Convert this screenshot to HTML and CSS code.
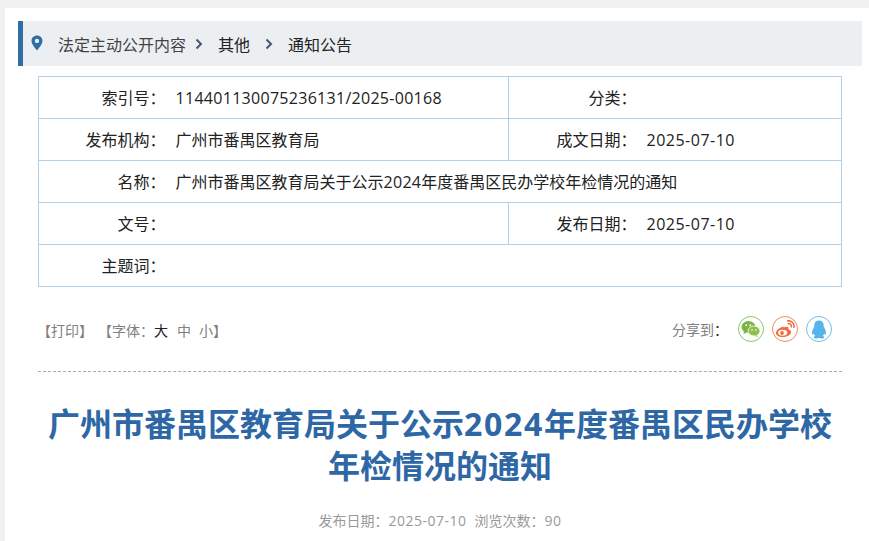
FILE: index.html
```html
<!DOCTYPE html>
<html lang="zh-CN">
<head>
<meta charset="utf-8">
<title>通知公告</title>
<link rel="stylesheet" href="styles.css">
</head>
<body>
<div class="page">
  <nav class="crumb">
    <svg class="pin" width="12" height="16" viewBox="0 0 12 16"><path fill="#2f6da3" fill-rule="evenodd" d="M6 .5C2.800.5.500 2.900.500 5.800.500 9.300 4.200 13.300 6 15.500 7.800 13.300 11.500 9.300 11.500 5.800 11.500 2.900 9.200.500 6 .500ZM6 3.700a2.200 2.200 0 1 1 0 4.400 2.200 2.200 0 0 1 0-4.400Z"/></svg>
    <a class="c1">法定主动公开内容</a>
    <svg class="chev chev1" width="8" height="12" viewBox="0 0 8 12"><path d="M1.500 1.500 6 6l-4.500 4.500" fill="none" stroke="#44586c" stroke-width="2"/></svg>
    <a class="c2">其他</a>
    <svg class="chev chev2" width="8" height="12" viewBox="0 0 8 12"><path d="M1.500 1.500 6 6l-4.500 4.500" fill="none" stroke="#44586c" stroke-width="2"/></svg>
    <a class="c2">通知公告</a>
  </nav>
  <div class="body">
    <table class="meta">
      <colgroup><col class="w1"><col class="w2"><col class="w3"><col class="w4"></colgroup>
      <tr><th>索引号：</th><td><span class="num">114401130075236131/2025-00168</span></td><th class="split">分类：</th><td></td></tr>
      <tr><th>发布机构：</th><td>广州市番禺区教育局</td><th class="split">成文日期：</th><td><span class="date">2025-07-10</span></td></tr>
      <tr><th>名称：</th><td colspan="3">广州市番禺区教育局关于公示<span class="num">2024</span>年度番禺区民办学校年检情况的通知</td></tr>
      <tr><th>文号：</th><td></td><th class="split">发布日期：</th><td><span class="date">2025-07-10</span></td></tr>
      <tr><th>主题词：</th><td colspan="3"></td></tr>
    </table>
    <div class="tools">
      <div class="left">
        <span>【打印】</span>
        <span class="font">【字体：<b>大</b><i>中</i><i>小</i>】</span>
      </div>
      <div class="share">
        <span class="lbl">分享到<em>：</em></span>
        <span class="ic wx"><svg width="20" height="18" viewBox="0 0 20 18"><ellipse cx="7.500" cy="7" rx="7" ry="6" fill="#7cb342"/><path d="M3 11l-.5 3 3-1.500z" fill="#7cb342"/><ellipse cx="13" cy="11" rx="6" ry="5" fill="#8bc34a" stroke="#fff" stroke-width=".8"/><path d="M16 15l1 2-3-1z" fill="#8bc34a"/><circle cx="5.300" cy="5.200" r=".9" fill="#fff"/><circle cx="9.300" cy="5.200" r=".9" fill="#fff"/><circle cx="11" cy="10" r=".8" fill="#fff"/><circle cx="15" cy="10" r=".8" fill="#fff"/></svg></span>
        <span class="ic wb"><svg width="20" height="18" viewBox="0 0 20 18"><path fill="#f26a3d" d="M8.500 6.500C4.800 7.400 1 10.400 1 13c0 2.500 3 4 7 4 4.500 0 8-2.400 8-5 0-1.700-1.500-2.300-2.600-2.600.4-1.300.2-2.600-2-2.600-.8 0-1.800.3-2.900.7z"/><ellipse cx="7.700" cy="12.800" rx="4.600" ry="3" fill="#fff"/><circle cx="7" cy="13" r="1.900" fill="#f26a3d"/><path d="M12.500 3.500c2.500-.5 4.500 1.500 3.800 4M12 .8c4.500-.8 8 3 6.800 7.200" fill="none" stroke="#f26a3d" stroke-width="1.500"/></svg></span>
        <span class="ic qq"><svg width="16" height="19" viewBox="0 0 16 19"><path fill="#55b4ea" d="M8 .5c-3 0-4.700 2.200-4.700 5 0 1-.2 1.400-.6 2.300C1.500 10 .8 12 1 14c.2 1 .8.700 1.800-.6.300 1.200.8 2 1.600 2.700-1.300.4-1.800 1-1.600 1.600.3.800 2.500.8 3.800.5.700-.2 1.300-.2 2.800 0 1.300.3 3.500.3 3.800-.5.200-.6-.3-1.200-1.600-1.600.8-.7 1.300-1.500 1.600-2.700 1 1.300 1.600 1.600 1.800.6.200-2-.5-4-1.700-6.200-.4-.9-.6-1.300-.6-2.300 0-2.800-1.700-5-4.700-5z"/></svg></span>
      </div>
    </div>
    <div class="rule"></div>
    <h1>广州市番禺区教育局关于公示<span class="num-lg">2024</span>年度番禺区民办学校<br>年检情况的通知</h1>
    <p class="info"><span>发布日期：<span class="num-sm">2025-07-10</span></span><span>浏览次数：<span class="num-sm">90</span></span></p>
  </div>
</div>
</body>
</html>
```
FILE: styles.css
```css
html, body { margin: 0; height: 100%; overflow: hidden; }
body {
  background: #f1f1f1;
  padding: 8px 0 0 5px;
  box-sizing: border-box;
  font-family: "Open Sans", "Noto Sans CJK SC", sans-serif;
  color: #222;
}
.page { background: #fff; height: 533px; padding: 13px 7px 0 13px; box-sizing: border-box; overflow: hidden; }
.crumb {
  height: 45px;
  background: #eceff2;
  border-left: 5px solid #2f6da3;
  display: flex;
  align-items: center;
  font-size: 16px;
  box-sizing: border-box;
  padding-left: 8px;
}
.pin { margin-right: 15px; margin-top: -2px; }
.c1 { color: #444; }
.c2 { color: #222; }
.chev1 { margin: 0 15px 0 9px; }
.chev2 { margin: 0 15px 0 15px; }
.body { padding: 10px 20px 0 20px; }
.meta {
  width: 804px;
  border-collapse: collapse;
  table-layout: fixed;
  font-size: 16px;
  border: 1px solid #b0cfe8;
}
.w1 { width: 127px; }
.w2 { width: 343px; }
.w3 { width: 128px; }
.meta tr { height: 42px; }
.meta tr + tr th, .meta tr + tr td { border-top: 1px solid #b0cfe8; }
.meta th, .meta td { padding: 0; line-height: 20px; }
.meta th { font-weight: 400; text-align: right; color: #222; }
.meta td { padding-left: 10px; color: #222; }
.meta .split { border-left: 1px solid #b0cfe8; }
.num { letter-spacing: .29px; }
.date { letter-spacing: .5px; }
.num-lg { letter-spacing: 1.7px; }
.num-sm { letter-spacing: .5px; }
.tools { display: flex; justify-content: space-between; align-items: center; height: 84px; padding-top: 1px; box-sizing: border-box; font-size: 14px; color: #808080; }
.left { display: flex; gap: 5px; margin-left: -1px; }
.font b { font-weight: 400; color: #222; margin-right: 9px; }
.font i { font-style: normal; margin-right: 8px; }
.font i:last-of-type { margin-right: 0; }
.share { display: flex; align-items: center; gap: 8px; padding-right: 10px; margin-top: -1px; }
.lbl { margin-right: 2px; }
.lbl em { font-style: normal; color: #222; }
.ic { width: 26px; height: 26px; box-sizing: border-box; border-radius: 50%; border: 1px solid #888; display: flex; align-items: center; justify-content: center; }
.wx { border-color: #8bc85e; }
.wb { border-color: #f58a5a; }
.qq { border-color: #6cbcec; }
.rule { border-top: 1px dashed #aaa; }
h1 {
  margin: 31px 0 0;
  font-size: 32px;
  line-height: 42px;
  font-weight: 700;
  text-align: center;
  color: #2e67a5;
}
.info { margin: 23px 0 0; text-align: center; font-size: 14px; color: #999; display: flex; justify-content: center; gap: 8px; }
```
